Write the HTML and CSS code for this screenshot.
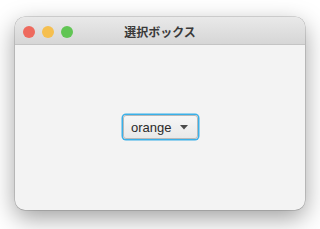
FILE: index.html
```html
<!DOCTYPE html>
<html>
<head>
<meta charset="utf-8">
<link rel="stylesheet" href="styles.css">
</head>
<body>
<div class="window">
  <div class="titlebar">
    <div class="lights">
      <span class="light red"></span>
      <span class="light yellow"></span>
      <span class="light green"></span>
    </div>
    <div class="title">選択ボックス</div>
  </div>
  <div class="content">
    <div class="combo">
      <span class="value">orange</span>
      <svg class="arrow" width="8" height="5" viewBox="0 0 8 5"><path d="M0 0 H8 L4 4.5 Z" fill="#4a4a4a"/></svg>
    </div>
  </div>
</div>
</body>
</html>
```
FILE: styles.css
```css
html, body {
  margin: 0;
  padding: 0;
  width: 320px;
  height: 229px;
  background: #ffffff;
  overflow: hidden;
}
body {
  padding: 17px 15px 0 15px;
  box-sizing: border-box;
}
.window {
  width: 290px;
  height: 193px;
  border-radius: 10px;
  background: #f3f3f3;
  box-shadow: 0 0 0 0.5px rgba(0,0,0,0.25), 0 8px 24px rgba(0,0,0,0.38);
  overflow: hidden;
  display: flex;
  flex-direction: column;
}
.titlebar {
  height: 27px;
  flex: none;
  background: linear-gradient(#e9e9e9, #d6d6d6);
  border-bottom: 1px solid #c4c4c4;
  position: relative;
  display: flex;
  align-items: center;
  justify-content: center;
}
.lights {
  position: absolute;
  left: 8px;
  top: 9px;
  display: flex;
  gap: 7px;
}
.light {
  width: 12px;
  height: 12px;
  border-radius: 50%;
  display: block;
}
.red { background: #ee6a5e; }
.yellow { background: #f5bf4f; }
.green { background: #61c554; }
.title {
  font-family: "Noto Sans CJK JP", sans-serif;
  font-weight: bold;
  font-size: 12px;
  color: #3a3a3a;
  margin-top: 2px;
}
.content {
  flex: 1;
  display: flex;
  justify-content: center;
  align-items: flex-start;
  padding-top: 70px;
  padding-left: 1px;
}
.combo {
  width: 75px;
  height: 24px;
  box-sizing: border-box;
  border: 1px solid #b9b9b9;
  border-radius: 3px;
  background: linear-gradient(#f6f6f6, #e9e9e9);
  box-shadow: 0 0 0 1.5px #3ab0e8;
  display: flex;
  align-items: center;
  justify-content: space-between;
  padding: 0 9px 0 7px;
}
.value {
  font-family: "Liberation Sans", Arial, sans-serif;
  font-size: 13px;
  color: #2a2a2a;
}
.arrow {
  display: block;
  margin-top: 1px;
}
```
